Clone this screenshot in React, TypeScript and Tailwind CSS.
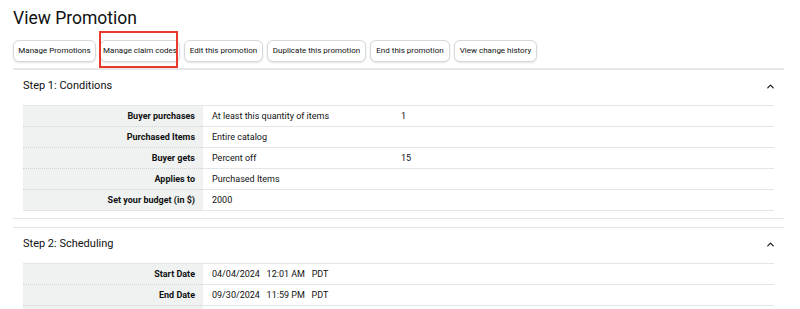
import React from "react";
import { ChevronUp } from "lucide-react";

type Row = { label: string; value: string; extra?: string };

const conditions: Row[] = [
  { label: "Buyer purchases", value: "At least this quantity of items", extra: "1" },
  { label: "Purchased Items", value: "Entire catalog" },
  { label: "Buyer gets", value: "Percent off", extra: "15" },
  { label: "Applies to", value: "Purchased Items" },
  { label: "Set your budget (in $)", value: "2000" },
];

const scheduling: Row[] = [
  { label: "Start Date", value: "04/04/2024\u00a0\u00a0\u00a012:01 AM\u00a0\u00a0\u00a0PDT" },
  { label: "End Date", value: "09/30/2024\u00a0\u00a0\u00a011:59 PM\u00a0\u00a0\u00a0PDT" },
  { label: "", value: "" },
];

const buttons = [
  { label: "Manage Promotions", w: "w-[83px]" },
  { label: "Manage claim codes", w: "w-[80px]" },
  { label: "Edit this promotion", w: "w-[79px]" },
  { label: "Duplicate this promotion", w: "w-[99px]" },
  { label: "End this promotion", w: "w-[80px]" },
  { label: "View change history", w: "w-[83px]" },
];

function DetailTable({ rows }: { rows: Row[] }) {
  return (
    <div className="mx-[10px] border-t border-[#e3e6e6] text-[9px] leading-[12px]">
      {rows.map((r, i) => (
        <div key={i} className="flex h-[21px]">
          <div
            className={
              "w-[180px] shrink-0 bg-[#f0f2f2] pr-[8px] flex items-center justify-end font-bold whitespace-nowrap " +
              (i < rows.length - 1 ? "border-b border-dotted border-[#cfd3d3]" : "border-b border-[#e3e6e6]")
            }
          >
            {r.label}
          </div>
          <div className="flex-1 flex items-center border-b border-[#e3e6e6] whitespace-nowrap">
            <div className="w-[198px] pl-[9px]">{r.value}</div>
            <div>{r.extra}</div>
          </div>
        </div>
      ))}
    </div>
  );
}

function Section({ title, rows, last }: { title: string; rows: Row[]; last?: boolean }) {
  return (
    <section className={last ? "border-t border-[#e3e6e6]" : "border-b border-[#e3e6e6] pb-[7px]"}>
      <div className="flex items-center justify-between h-[35px] pl-[10px] pr-[8px] pb-[2px]">
        <h2 className="text-[11px] text-[#0f1111]">{title}</h2>
        <ChevronUp size={11} strokeWidth={2.5} className="text-[#0f1111]" />
      </div>
      <DetailTable rows={rows} />
    </section>
  );
}

export default function App() {
  return (
    <div className="relative w-[800px] h-[309px] overflow-hidden bg-white text-[#0f1111] font-['Roboto',sans-serif]">
      <div className="pl-[13px] pr-[16px]">
        <h1 className="pt-[5px] h-[37px] text-[17.5px] leading-[27px]">View Promotion</h1>

        <div className="flex gap-[4px] h-[22px] mt-[3px]">
          {buttons.map((b) => (
            <button
              key={b.label}
              className={
                b.w +
                " flex items-center justify-center rounded-[6px] border border-[#d5d9d9] bg-white text-[8px] shadow-[0_1px_2px_rgba(15,17,17,0.12)] whitespace-nowrap"
              }
            >
              {b.label}
            </button>
          ))}
        </div>

        <div className="mt-[6px] border-t-2 border-[#e7e7e7]">
          <Section title="Step 1: Conditions" rows={conditions} />
          <div className="h-[8px]" />
          <Section title="Step 2: Scheduling" rows={scheduling} last />
        </div>
      </div>

      {/* highlight box around the claim codes button */}
      <div className="absolute left-[99px] top-[31px] w-[79px] h-[37px] border-2 border-[#e8392c]" />
    </div>
  );
}
